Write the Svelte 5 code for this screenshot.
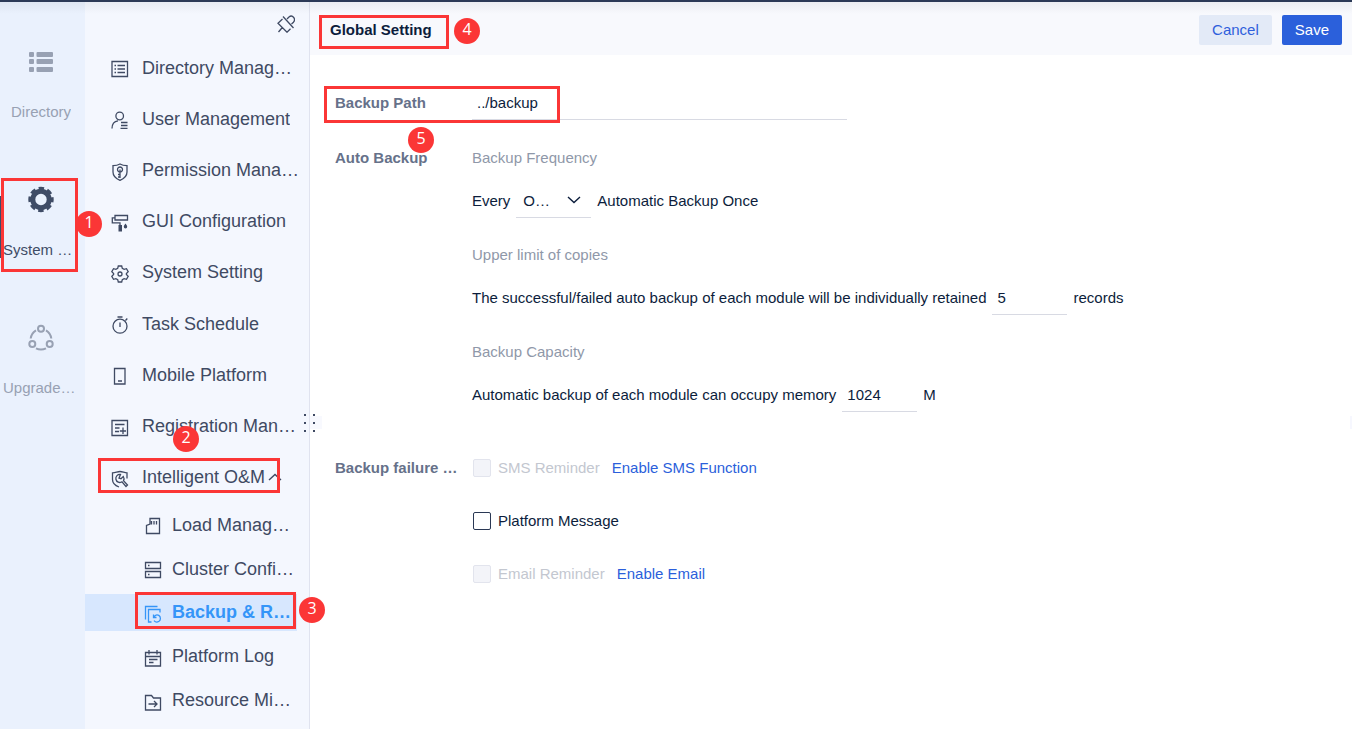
<script>
  const rail = [
    { id: 'directory', label: 'Directory' },
    { id: 'system', label: 'System Configuration', active: true },
    { id: 'upgrade', label: 'Upgrade Management' }
  ];

  const menu = [
    {
      label: 'Directory Management',
      path: 'M1 1.5h15.5v15H1z M3.5 5.5H5 M3.5 9H5 M3.5 12.5H5 M6.5 5.5H14 M6.5 9H14 M6.5 12.5H14'
    },
    {
      label: 'User Management',
      path: 'M12.5 5a3.8 3.8 0 1 1-7.6 0a3.8 3.8 0 1 1 7.6 0z M1 17.5c0-4.5 2-7.2 6-7.7 M10 11.5h6.5 M10 14.5h6.5 M9.5 17.5h7'
    },
    {
      label: 'Permission Management',
      path: 'M9 1c2.2 1.2 4.5 1.6 7 1.7V9c0 4-3 6.7-7 8.3C5 15.7 2 13 2 9V2.7C4.5 2.6 6.8 2.2 9 1z M11.5 6.5a2.5 2.5 0 1 1-5 0a2.5 2.5 0 1 1 5 0z M9 6.5V15 M9 11.5H7 M9 14H7'
    },
    {
      label: 'GUI Configuration',
      path: 'M4 1.5h12.5V6H4z M4 3.8H1.3v5H9v2.5',
      fill: 'M7.5 11H11v6.5H7.5z M14.5 9.5c1 1.5 1.7 2.3 1.7 3.2a1.7 1.7 0 0 1-3.4 0c0-.9.7-1.7 1.7-3.2z'
    },
    {
      label: 'System Setting',
      path: 'M7.3 1h3.4l.6 2.4 1.8 1 2.4-.7 1.7 3-1.8 1.8v1l1.8 1.8-1.7 3-2.4-.7-1.8 1-.6 2.4H7.3l-.6-2.4-1.8-1-2.4.7-1.7-3 1.8-1.8v-1L.8 6.7l1.7-3 2.4.7 1.8-1z M11 9a2 2 0 1 1-4 0a2 2 0 1 1 4 0z'
    },
    {
      label: 'Task Schedule',
      path: 'M16 10.2a7 7 0 1 1-14 0a7 7 0 1 1 14 0z M6.5 1h5 M14.5 4.5l1.8-2 M9 6.5V11'
    },
    { label: 'Mobile Platform', path: 'M3.5 1.5H14V17H3.5z M7 14h4' },
    {
      label: 'Registration Management',
      path: 'M1 1.5h15.5v15H1z M4 5.5h9.5 M4 9h4.5 M4 12.5h4 M12 8.5V15 M8.8 12H15'
    },
    {
      label: 'Intelligent O&M',
      path: 'M16 8.5V2.9C13.5 2.9 11.5 1.5 9 1.5S4.5 2.9 1.5 2.9v6.6c0 3.5 2.5 6 6.5 7.5 M9.5 4.5a4 4 0 1 0 1.5 7.3l4 4.7 1.5-1.5-4-4.3c.8-1.5.6-3-.2-4.2L10 8.7 8 8z',
      open: true
    }
  ];

  const submenu = [
    { label: 'Load Management', path: 'M6 1.5h9.5v15h-13v-8L6 7z M7.5 4v3.5 M10 4v3.5 M12.5 4v3.5' },
    { label: 'Cluster Configuration', path: 'M1.5 1.5h15v6h-15z M1.5 10.5h15v6h-15z M4 4.5h1.5 M4 13.5h1.5' },
    {
      label: 'Backup & Restore',
      path: 'M13.5 1.5h-12v13 M16 7.5v-3H4.5V17h3 M9.5 9.5v3h3 M9.8 12.2c1-2.2 3.2-2.8 5-1.8 2.2 1.4 2 4.6.2 5.9-1.6 1.1-3.8.8-5-.6',
      active: true
    },
    { label: 'Platform Log', path: 'M1.5 3.5h15V17h-15z M1.5 7.5h15 M5 1v4.5 M13 1v4.5 M5 10.5h8.5 M5 13.5h4.5' },
    { label: 'Resource Migration', path: 'M1.5 2.5h6l2 2.5h7v12h-15z M4.5 11H13 M10 8l3 3-3 3' }
  ];

  // Numbered steps of the guide, drawn over the page
  const steps = [
    { n: 1, box: [1, 178, 77, 94], dot: [76, 211] },
    { n: 2, box: [98, 458, 182, 35], dot: [173, 426] },
    { n: 3, box: [135, 592, 161, 37], dot: [299, 597] },
    { n: 4, box: [319, 15, 130, 34], dot: [454, 18] },
    { n: 5, box: [324, 86, 236, 37], dot: [408, 127] }
  ];

  let backupPath = $state('../backup');
  let frequency = $state('day');
  let copies = $state('5');
  let capacity = $state('1024');
  let platformMessage = $state(false);
</script>

{#snippet icon(item)}
  <svg class="icon" viewBox="0 0 18 18" aria-hidden="true">
    <path d={item.path} />
    {#if item.fill}
      <path class="solid" d={item.fill} />
    {/if}
  </svg>
{/snippet}

<div class="app">
  <nav class="rail" aria-label="Modules">
    {#each rail as item}
      <button class="rail-item" class:active={item.active}>
        <svg viewBox="0 0 28 28" aria-hidden="true">
          {#if item.id === 'directory'}
            <g fill="currentColor">
              <rect x="2" y="4" width="5" height="5" rx="1" />
              <rect x="9.5" y="4" width="16.5" height="5" rx="1" />
              <rect x="2" y="11" width="5" height="5" rx="1" />
              <rect x="9.5" y="11" width="16.5" height="5" rx="1" />
              <rect x="2" y="19" width="5" height="5" rx="1" />
              <rect x="9.5" y="19" width="16.5" height="5" rx="1" />
            </g>
          {:else if item.id === 'system'}
            <g fill="none" stroke="currentColor">
              <circle cx="14" cy="13.5" r="8.2" stroke-width="5" />
              <circle cx="14" cy="13.5" r="11" stroke-width="3.4" stroke-dasharray="5.3 3.34" stroke-dashoffset="2.65" />
            </g>
          {:else}
            <g fill="none" stroke="currentColor" stroke-width="2">
              <circle cx="14" cy="4.7" r="3" />
              <circle cx="5.3" cy="20" r="3" />
              <circle cx="22.7" cy="20" r="3" />
              <path d="M9 6.3a11 11 0 0 0-5.3 8.2 M19 6.3a11 11 0 0 1 5.3 8.2 M9 24.3a11 11 0 0 0 10 0" />
            </g>
          {/if}
        </svg>
        <span>{item.label}</span>
      </button>
    {/each}
  </nav>

  <aside class="side">
    <div class="side-head">
      <button class="pin" aria-label="Unpin menu">
        <svg class="icon" viewBox="0 0 18 18" aria-hidden="true">
          <path d="M6 1.5L16.500 13 M5.500 4L1 8.200l9 9 3.500-3.500 M5.300 12.500L1.500 17 M10 4l2-2c1.500-1.200 3.500-1 4.700.5s1 3.200-.2 4.700L14.500 9" />
        </svg>
      </button>
    </div>
    <ul class="menu">
      {#each menu as item}
        <li>
          <button class="menu-item">
            {@render icon(item)}
            <span>{item.label}</span>
            {#if item.open}
              <svg class="caret" viewBox="0 0 14 8" aria-hidden="true"><path d="M1 7l6-5.5L13 7" /></svg>
            {/if}
          </button>
        </li>
      {/each}
    </ul>
    <ul class="menu submenu">
      {#each submenu as item}
        <li>
          <button class="menu-item" class:active={item.active}>
            {@render icon(item)}
            <span>{item.label}</span>
          </button>
        </li>
      {/each}
    </ul>
    <div class="grip"><i></i><i></i><i></i><i></i><i></i><i></i></div>
  </aside>

  <main>
    <header>
      <h1>Global Setting</h1>
      <div class="actions">
        <button class="btn">Cancel</button>
        <button class="btn primary">Save</button>
      </div>
    </header>

    <form>
      <label class="name path-name" for="path">Backup Path</label>
      <input id="path" class="field path" type="text" bind:value={backupPath} />

      <span class="name auto-name">Auto Backup</span>
      <div class="groups">
        <section>
          <h2>Backup Frequency</h2>
          <div class="line">
            <label for="frequency">Every</label>
            <div class="select">
              <select id="frequency" class="field" bind:value={frequency}>
                <option value="day">One Day</option>
                <option value="week">One Week</option>
              </select>
              <svg class="caret" viewBox="0 0 14 8" aria-hidden="true"><path d="M1 1l6 5.5L13 1" /></svg>
            </div>
            <span>Automatic Backup Once</span>
          </div>
        </section>
        <section>
          <h2>Upper limit of copies</h2>
          <div class="line">
            <label for="copies">The successful/failed auto backup of each module will be individually retained</label>
            <input id="copies" class="field" type="text" bind:value={copies} />
            <span>records</span>
          </div>
        </section>
        <section>
          <h2>Backup Capacity</h2>
          <div class="line">
            <label for="capacity">Automatic backup of each module can occupy memory</label>
            <input id="capacity" class="field" type="text" bind:value={capacity} />
            <span>M</span>
          </div>
        </section>
      </div>

      <span class="name">Backup failure reminder</span>
      <div class="checks">
        <div class="check">
          <label class="disabled"><input type="checkbox" disabled />SMS Reminder</label>
          <a href="#sms">Enable SMS Function</a>
        </div>
        <div class="check">
          <label><input type="checkbox" bind:checked={platformMessage} />Platform Message</label>
        </div>
        <div class="check">
          <label class="disabled"><input type="checkbox" disabled />Email Reminder</label>
          <a href="#email">Enable Email</a>
        </div>
      </div>
    </form>
    <div class="edge"></div>
  </main>

  {#each steps as { n, box, dot }}
    <div class="step-box" style="left: {box[0]}px; top: {box[1]}px; width: {box[2]}px; height: {box[3]}px"></div>
    <div class="step-dot" style="left: {dot[0]}px; top: {dot[1]}px">{n}</div>
  {/each}
</div>

<style>
  :global(body) {
    background: #fff;
  }

  .app {
    position: relative;
    display: flex;
    box-sizing: border-box;
    min-height: 100vh;
    border-top: 2px solid #2c3a57;
    color: #0c1d3c;
    font: 15px/20px 'Liberation Sans', Arial, sans-serif;
    overflow: hidden;
  }

  .app::before {
    content: '';
    position: absolute;
    inset: 0 0 auto;
    z-index: 1;
    height: 12px;
    background: linear-gradient(rgba(90, 100, 110, 0.08), transparent);
    pointer-events: none;
  }

  button,
  input,
  select {
    margin: 0;
    border: 0;
    border-radius: 0;
    padding: 0;
    background: none;
    color: inherit;
    font: inherit;
  }

  button {
    cursor: pointer;
  }

  .rail {
    display: flex;
    flex: none;
    flex-direction: column;
    gap: 64px;
    box-sizing: border-box;
    width: 85px;
    padding-top: 46px;
    background: #eaf1fd;
  }

  .rail-item {
    position: relative;
    display: flex;
    flex-direction: column;
    align-items: center;
    gap: 26px;
    padding: 0 6px 0 3px;
    color: #98a1b3;
  }

  .rail-item svg {
    width: 28px;
    height: 28px;
  }

  .rail-item span {
    max-width: 100%;
    overflow: hidden;
    text-overflow: ellipsis;
    white-space: nowrap;
  }

  .rail-item.active {
    color: #3f4c66;
  }

  .rail-item.active::before {
    content: '';
    position: absolute;
    top: 10px;
    left: 0;
    width: 1px;
    height: 62px;
    background: #3f4c66;
  }

  .side {
    position: relative;
    flex: none;
    box-sizing: border-box;
    width: 225px;
    border-right: 1px solid #e0e3ef;
    background: #f4f7fe;
    color: #3f4a63;
  }

  .side-head {
    display: flex;
    align-items: flex-end;
    justify-content: flex-end;
    box-sizing: border-box;
    height: 40px;
    padding: 0 14px 9px;
  }

  .pin {
    display: flex;
  }

  .icon {
    flex: none;
    width: 18px;
    height: 18px;
    fill: none;
    stroke: currentColor;
    stroke-width: 1.3;
  }

  .icon .solid {
    fill: currentColor;
    stroke: none;
  }

  .menu {
    display: grid;
    grid-template-columns: minmax(0, 1fr);
    grid-auto-rows: 1fr;
    align-items: center;
    min-height: 461px;
    margin: 0;
    padding: 0 9px 0 0;
    list-style: none;
  }

  .submenu {
    min-height: 219px;
    padding-right: 12px;
  }

  .menu-item {
    display: flex;
    align-items: center;
    gap: 13px;
    width: 100%;
    height: 37px;
    padding-left: 26px;
    font-size: 18px;
    line-height: 24px;
    text-align: left;
  }

  .menu-item .icon {
    margin-top: 3px;
  }

  .menu-item span {
    overflow: hidden;
    text-overflow: ellipsis;
    white-space: nowrap;
  }

  .menu-item .caret {
    margin-left: -10px;
  }

  .submenu .menu-item {
    gap: 10px;
    padding-left: 59px;
  }

  .submenu .active {
    background: #d7e7fe;
    color: #3595f8;
    font-weight: bold;
  }

  .caret {
    flex: none;
    width: 14px;
    height: 8px;
    fill: none;
    stroke: currentColor;
    stroke-width: 1.4;
  }

  .grip {
    position: absolute;
    top: 412px;
    right: -6px;
    z-index: 1;
    display: grid;
    grid-template-columns: 2px 2px;
    gap: 6px 7px;
  }

  .grip i {
    width: 2px;
    height: 2px;
    background: #3f4a63;
  }

  .grip::after {
    content: '';
    position: absolute;
    top: 2px;
    left: 6px;
    z-index: -1;
    width: 12px;
    height: 13px;
    background: #f8f9fe;
  }

  main {
    position: relative;
    flex: 1;
    min-width: 0;
  }

  header {
    display: flex;
    align-items: center;
    justify-content: space-between;
    box-sizing: border-box;
    height: 53px;
    padding: 3px 10px 0 20px;
    background: #f8f9fd;
  }

  h1,
  h2 {
    margin: 0;
    font-size: 15px;
  }

  .actions {
    display: flex;
    gap: 10px;
  }

  .btn {
    height: 30px;
    border-radius: 2px;
    padding: 0 13px;
    background: #e3eaf7;
    color: #2f5fdc;
  }

  .btn.primary {
    background: #2b60db;
    color: #fff;
  }

  form {
    display: grid;
    grid-template-columns: 125px minmax(0, 1fr);
    column-gap: 12px;
    padding: 31px 25px;
  }

  .name {
    overflow: hidden;
    color: #66718a;
    font-weight: bold;
    text-overflow: ellipsis;
    white-space: nowrap;
  }

  .path-name {
    align-self: center;
  }

  .auto-name {
    padding-top: 28px;
  }

  .field {
    box-sizing: border-box;
    width: 75px;
    height: 34px;
    border-bottom: 1px solid #d8dae3;
    padding: 0 5px;
    outline: 0;
  }

  .field.path {
    width: 375px;
    max-width: 100%;
  }

  .groups {
    display: flex;
    flex-direction: column;
    gap: 27px;
    padding: 28px 0 46px;
  }

  h2 {
    margin-bottom: 16px;
    color: #8f98a9;
    font-weight: normal;
  }

  .line {
    display: flex;
    align-items: center;
    gap: 6px;
  }

  .select {
    position: relative;
  }

  .select select {
    display: block;
    appearance: none;
    padding: 0 37px 0 7px;
    overflow: hidden;
    text-overflow: ellipsis;
    white-space: nowrap;
  }

  .select .caret {
    position: absolute;
    top: 12px;
    right: 10px;
    pointer-events: none;
  }

  .checks {
    display: flex;
    flex-direction: column;
    gap: 33px;
  }

  .check {
    display: flex;
    gap: 12px;
  }

  .check label {
    display: flex;
    align-items: center;
    gap: 7px;
    padding-left: 1px;
  }

  .check input {
    appearance: none;
    width: 18px;
    height: 18px;
    border: 1px solid #2a3854;
    border-radius: 2px;
  }

  .check input:checked {
    background: #2b60db;
  }

  .check .disabled {
    color: #c3c7d0;
  }

  .check .disabled input {
    border-color: #e2e4ed;
    background: #f3f4f9;
  }

  a {
    color: #2b5fdb;
    text-decoration: none;
  }

  .edge {
    position: absolute;
    top: 414px;
    right: 0;
    width: 2px;
    height: 13px;
    background: #f6f7fe;
  }

  .step-box {
    position: absolute;
    z-index: 2;
    box-sizing: border-box;
    margin-top: -2px;
    border: 3px solid #fb3636;
    pointer-events: none;
  }

  .step-dot {
    position: absolute;
    z-index: 2;
    box-sizing: border-box;
    width: 26px;
    height: 26px;
    margin-top: -2px;
    border-radius: 50%;
    background: #fb3636;
    color: #fff;
    font: 16px/22px 'Open Sans', 'Noto Sans', sans-serif;
    text-align: center;
    pointer-events: none;
  }
</style>
